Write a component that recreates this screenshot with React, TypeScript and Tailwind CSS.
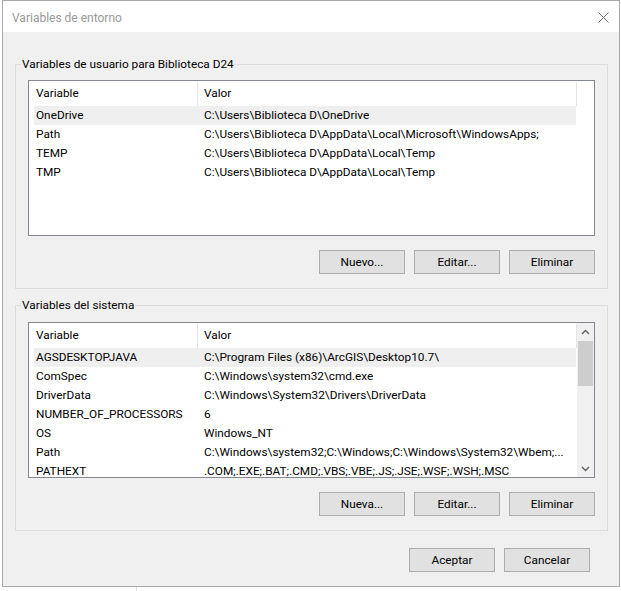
type EnvVar = [string, string]

const userVars: EnvVar[] = [
  ['OneDrive', 'C:\\Users\\Biblioteca D\\OneDrive'],
  ['Path', 'C:\\Users\\Biblioteca D\\AppData\\Local\\Microsoft\\WindowsApps;'],
  ['TEMP', 'C:\\Users\\Biblioteca D\\AppData\\Local\\Temp'],
  ['TMP', 'C:\\Users\\Biblioteca D\\AppData\\Local\\Temp'],
]

const systemVars: EnvVar[] = [
  ['AGSDESKTOPJAVA', 'C:\\Program Files (x86)\\ArcGIS\\Desktop10.7\\'],
  ['ComSpec', 'C:\\Windows\\system32\\cmd.exe'],
  ['DriverData', 'C:\\Windows\\System32\\Drivers\\DriverData'],
  ['NUMBER_OF_PROCESSORS', '6'],
  ['OS', 'Windows_NT'],
  ['Path', 'C:\\Windows\\system32;C:\\Windows;C:\\Windows\\System32\\Wbem;...'],
  ['PATHEXT', '.COM;.EXE;.BAT;.CMD;.VBS;.VBE;.JS;.JSE;.WSF;.WSH;.MSC'],
  ['PROCESSOR_ARCHITECTURE', 'AMD64'],
]

function Button({ label }: { label: string }) {
  return (
    <button
      type="button"
      className="h-[24px] w-[86px] border border-[#adadad] bg-[#e1e1e1] text-center leading-[22px] text-black"
    >
      {label}
    </button>
  )
}

function Chevron({ down }: { down?: boolean }) {
  return (
    <svg width="9" height="6" viewBox="0 0 9 6" className={down ? 'rotate-180' : ''}>
      <path d="M1 5 4.5 1.5 8 5" fill="none" stroke="#606060" strokeWidth="1.4" />
    </svg>
  )
}

function VarList({ rows, scroll }: { rows: EnvVar[]; scroll?: boolean }) {
  return (
    <div className="mx-[12px] flex h-[156px] overflow-hidden border border-[#828790] bg-white">
      <div className="w-[548px] shrink-0">
        {/* column headers */}
        <div className="flex h-[25px] items-start">
          <div className="w-[168px] pl-[7px] leading-[25px]">Variable</div>
          <div className="mt-px h-[24px] w-px bg-[#e5e5e5]" />
          <div className="w-[378px] pl-[6px] leading-[25px]">Valor</div>
          <div className="mt-px h-[24px] w-px bg-[#e5e5e5]" />
        </div>
        {rows.map(([name, value], i) => (
          <div
            key={name + i}
            className={`ml-[5px] flex h-[19px] w-[542px] leading-[19px] ${i === 0 ? 'bg-[#efefef]' : ''}`}
          >
            <div className="w-[164px] shrink-0 overflow-hidden pl-[2px] whitespace-nowrap">{name}</div>
            <div className="overflow-hidden pl-[6px] whitespace-nowrap">{value}</div>
          </div>
        ))}
      </div>
      {scroll && (
        <div className="flex w-[17px] shrink-0 flex-col bg-[#f0f0f0]">
          <div className="flex h-[17px] items-center justify-center">
            <Chevron />
          </div>
          <div className="mx-px mt-px h-[45px] bg-[#cdcdcd]" />
          <div className="mt-auto flex h-[17px] items-center justify-center">
            <Chevron down />
          </div>
        </div>
      )}
    </div>
  )
}

function Group({
  title,
  rows,
  scroll,
  addLabel,
  className,
  listGap,
}: {
  title: string
  rows: EnvVar[]
  scroll?: boolean
  addLabel: string
  className: string
  listGap: string
}) {
  return (
    <fieldset className={`mr-[11px] ml-[12px] min-w-0 border border-[#dcdcdc] pb-[14px] ${className}`}>
      <legend className="ml-[5px] px-px leading-[16px] text-black">{title}</legend>
      <div className={listGap}>
        <VarList rows={rows} scroll={scroll} />
      </div>
      <div className="mt-[14px] mr-[12px] flex justify-end gap-[9px]">
        <Button label={addLabel} />
        <Button label="Editar..." />
        <Button label="Eliminar" />
      </div>
    </fieldset>
  )
}

export default function App() {
  return (
    <div className="h-[591px] w-[621px] bg-white font-['Roboto',sans-serif] text-[11.8px] text-black">
      <div className="ml-[2px] flex h-[587px] w-[618px] flex-col border border-[#aaaaaa] bg-[#f0f0f0]">
        {/* title bar */}
        <div className="flex h-[31px] shrink-0 items-start bg-white">
          <span className="pt-[9px] pl-[9px] text-[12px] leading-[16px] text-[#999999]">Variables de entorno</span>
          <svg width="11" height="11" viewBox="0 0 11 11" className="mt-[11px] mr-[10px] ml-auto">
            <path d="M0.5 0.5 10.5 10.5M10.5 0.5 0.5 10.5" stroke="#707070" strokeWidth="1" />
          </svg>
        </div>

        <Group
          title="Variables de usuario para Biblioteca D24"
          rows={userVars}
          addLabel="Nuevo..."
          className="mt-[24px]"
          listGap="mt-[8px]"
        />
        <Group
          title="Variables del sistema"
          rows={systemVars}
          scroll
          addLabel="Nueva..."
          className="mt-[8px]"
          listGap="mt-[9px]"
        />

        <div className="mt-[17px] mr-[29px] flex justify-end gap-[9px]">
          <Button label="Aceptar" />
          <Button label="Cancelar" />
        </div>
      </div>
      <div className="ml-[136px] h-[4px] w-px bg-[#dddddd]" />
    </div>
  )
}
